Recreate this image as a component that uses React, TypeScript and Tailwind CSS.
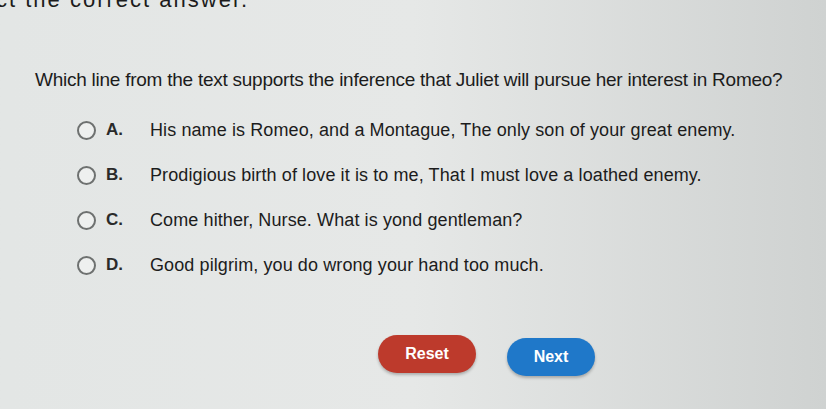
import React from "react";

const options = [
	{ letter: "A.", text: "His name is Romeo, and a Montague, The only son of your great enemy." },
	{ letter: "B.", text: "Prodigious birth of love it is to me, That I must love a loathed enemy." },
	{ letter: "C.", text: "Come hither, Nurse. What is yond gentleman?" },
	{ letter: "D.", text: "Good pilgrim, you do wrong your hand too much." },
];

export default function App() {
	return (
		<div
			className="w-[826px] h-[409px] overflow-hidden bg-gradient-to-r from-[#e3e6e5] via-[#e6e8e7] to-[#cfd2d1] text-[#1c1c1c]"
			style={{ fontFamily: '"Liberation Sans", Arial, sans-serif' }}
		>
			<p className="mt-[-11px] ml-[-56px] text-[22px] leading-[22px] tracking-[2px] whitespace-nowrap">Select the correct answer.</p>

			<p className="mt-[58px] ml-[35px] text-[19px] leading-[22px] tracking-[-0.25px] whitespace-nowrap">
				Which line from the text supports the inference that Juliet will pursue her interest in Romeo?
			</p>

			<div className="mt-[28px] ml-[77px] flex flex-col gap-[23px]">
				{options.map((o) => (
					<div key={o.letter} className="flex items-center h-[22px]">
						<span className="w-[19px] h-[19px] rounded-full border-2 border-[#6e7170] bg-[#eef0ef]" />
						<span className="ml-[10px] w-[44px] font-bold text-[17px] text-[#2a2a2a]">{o.letter}</span>
						<span className="text-[18px] tracking-[0.1px]">{o.text}</span>
					</div>
				))}
			</div>

			<div className="mt-[59px] ml-[378px] flex gap-[31px]">
				<button className="w-[98px] h-[38px] rounded-full bg-[#bd3a2c] text-white font-bold text-[16px] shadow-[0_2px_3px_rgba(0,0,0,0.25)]">
					Reset
				</button>
				<button className="mt-[3px] w-[88px] h-[38px] rounded-full bg-[#1f78c9] text-white font-bold text-[16px] shadow-[0_2px_3px_rgba(0,0,0,0.25)]">
					Next
				</button>
			</div>
		</div>
	);
}
